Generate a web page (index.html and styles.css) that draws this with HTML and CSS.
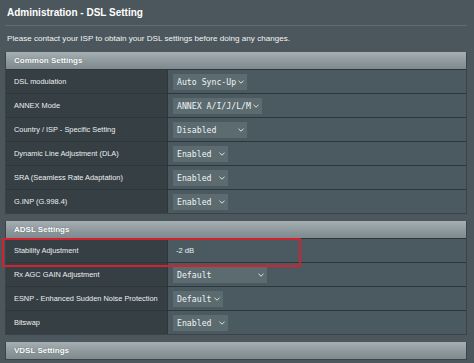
FILE: index.html
```html
<!DOCTYPE html>
<html lang="en">
<head>
    <meta charset="UTF-8">
    <title>Administration - DSL Setting</title>
    <link rel="stylesheet" href="styles.css">
</head>
<body>
    <div class="page">
        <h1 class="title">Administration - DSL Setting</h1>
        <p class="desc">Please contact your ISP to obtain your DSL settings before doing any changes.</p>

        <div class="section">
            <div class="section-head">Common Settings</div>
            <div class="row">
                <div class="label">DSL modulation</div>
                <div class="value"><span class="select w-74">Auto Sync-Up<svg class="chev" viewBox="0 0 6 4"><path d="M0.5 0.8 L3 3.2 L5.5 0.8"/></svg></span></div>
            </div>
            <div class="row">
                <div class="label">ANNEX Mode</div>
                <div class="value"><span class="select w-89">ANNEX A/I/J/L/M<svg class="chev" viewBox="0 0 6 4"><path d="M0.5 0.8 L3 3.2 L5.5 0.8"/></svg></span></div>
            </div>
            <div class="row">
                <div class="label">Country / ISP - Specific Setting</div>
                <div class="value"><span class="select w-74">Disabled<svg class="chev" viewBox="0 0 6 4"><path d="M0.5 0.8 L3 3.2 L5.5 0.8"/></svg></span></div>
            </div>
            <div class="row">
                <div class="label">Dynamic Line Adjustment (DLA)</div>
                <div class="value"><span class="select w-55">Enabled<svg class="chev" viewBox="0 0 6 4"><path d="M0.5 0.8 L3 3.2 L5.5 0.8"/></svg></span></div>
            </div>
            <div class="row">
                <div class="label">SRA (Seamless Rate Adaptation)</div>
                <div class="value"><span class="select w-55">Enabled<svg class="chev" viewBox="0 0 6 4"><path d="M0.5 0.8 L3 3.2 L5.5 0.8"/></svg></span></div>
            </div>
            <div class="row">
                <div class="label">G.INP (G.998.4)</div>
                <div class="value"><span class="select w-55">Enabled<svg class="chev" viewBox="0 0 6 4"><path d="M0.5 0.8 L3 3.2 L5.5 0.8"/></svg></span></div>
            </div>
        </div>

        <div class="section">
            <div class="section-head">ADSL Settings</div>
            <div class="row highlight">
                <div class="label">Stability Adjustment</div>
                <div class="value plain">-2 dB</div>
            </div>
            <div class="row">
                <div class="label">Rx AGC GAIN Adjustment</div>
                <div class="value"><span class="select w-94">Default<svg class="chev" viewBox="0 0 6 4"><path d="M0.5 0.8 L3 3.2 L5.5 0.8"/></svg></span></div>
            </div>
            <div class="row">
                <div class="label">ESNP - Enhanced Sudden Noise Protection</div>
                <div class="value"><span class="select w-50">Default<svg class="chev" viewBox="0 0 6 4"><path d="M0.5 0.8 L3 3.2 L5.5 0.8"/></svg></span></div>
            </div>
            <div class="row">
                <div class="label">Bitswap</div>
                <div class="value"><span class="select w-55">Enabled<svg class="chev" viewBox="0 0 6 4"><path d="M0.5 0.8 L3 3.2 L5.5 0.8"/></svg></span></div>
            </div>
        </div>

        <div class="section">
            <div class="section-head">VDSL Settings</div>
        </div>
    </div>
</body>
</html>
```

FILE: styles.css
```css
* {
    margin: 0;
    padding: 0;
    box-sizing: border-box;
    font-family: "Liberation Sans", Arial, sans-serif;
}

body {
    background-color: #4b575c;
    color: #eef1f2;
    overflow: hidden;
}

.page {
    padding: 0 7px 0 5px;
}

.title {
    font-size: 10px;
    font-weight: bold;
    color: #ffffff;
    padding: 6px 2px 6px;
    line-height: 13px;
    border-bottom: 1px solid #5f6b70;
}

.desc {
    font-size: 8.1px;
    line-height: 10px;
    padding: 8px 2px 8px;
    color: #f2f4f5;
}

.section {
    border: 1px solid #3a4448;
    border-top: none;
    margin-bottom: 7px;
    background: #4a5a60;
}

.section-head {
    height: 17px;
    line-height: 17px;
    padding-left: 8px;
    font-size: 8px;
    font-weight: bold;
    color: #ffffff;
    text-shadow: 0 0 1px #4c575b;
    background: linear-gradient(#a5afb3, #8c979b 60%, #7f8a8e);
}

.row {
    display: flex;
    height: 24px;
    border-top: 1px solid #2d363a;
}

.highlight {
    position: relative;
}

.highlight::after {
    content: "";
    position: absolute;
    left: -4px;
    top: -1px;
    width: 295px;
    height: 25px;
    border: 2px solid #d3222f;
}

.label {
    width: 162px;
    background: #353f44;
    display: flex;
    align-items: center;
    padding-left: 8px;
    font-size: 7.4px;
    color: #eceff0;
    border-right: 1px solid #2d363a;
}

.value {
    flex: 1;
    display: flex;
    align-items: center;
    padding-left: 5px;
}

.value.plain {
    font-size: 7.6px;
    padding-left: 8px;
}

.select {
    display: flex;
    align-items: center;
    justify-content: space-between;
    height: 16px;
    padding: 0 3px 0 4px;
    background: #5b6b70;
    font-family: "DejaVu Sans Mono", monospace;
    font-size: 8.2px;
    color: #f1f4f5;
}

.chev {
    width: 6px;
    height: 4px;
    fill: none;
    stroke: #dfe4e5;
    stroke-width: 1;
}

.w-50 { width: 50px; }
.w-55 { width: 55px; }
.w-74 { width: 74px; }
.w-89 { width: 89px; }
.w-94 { width: 94px; }
```
